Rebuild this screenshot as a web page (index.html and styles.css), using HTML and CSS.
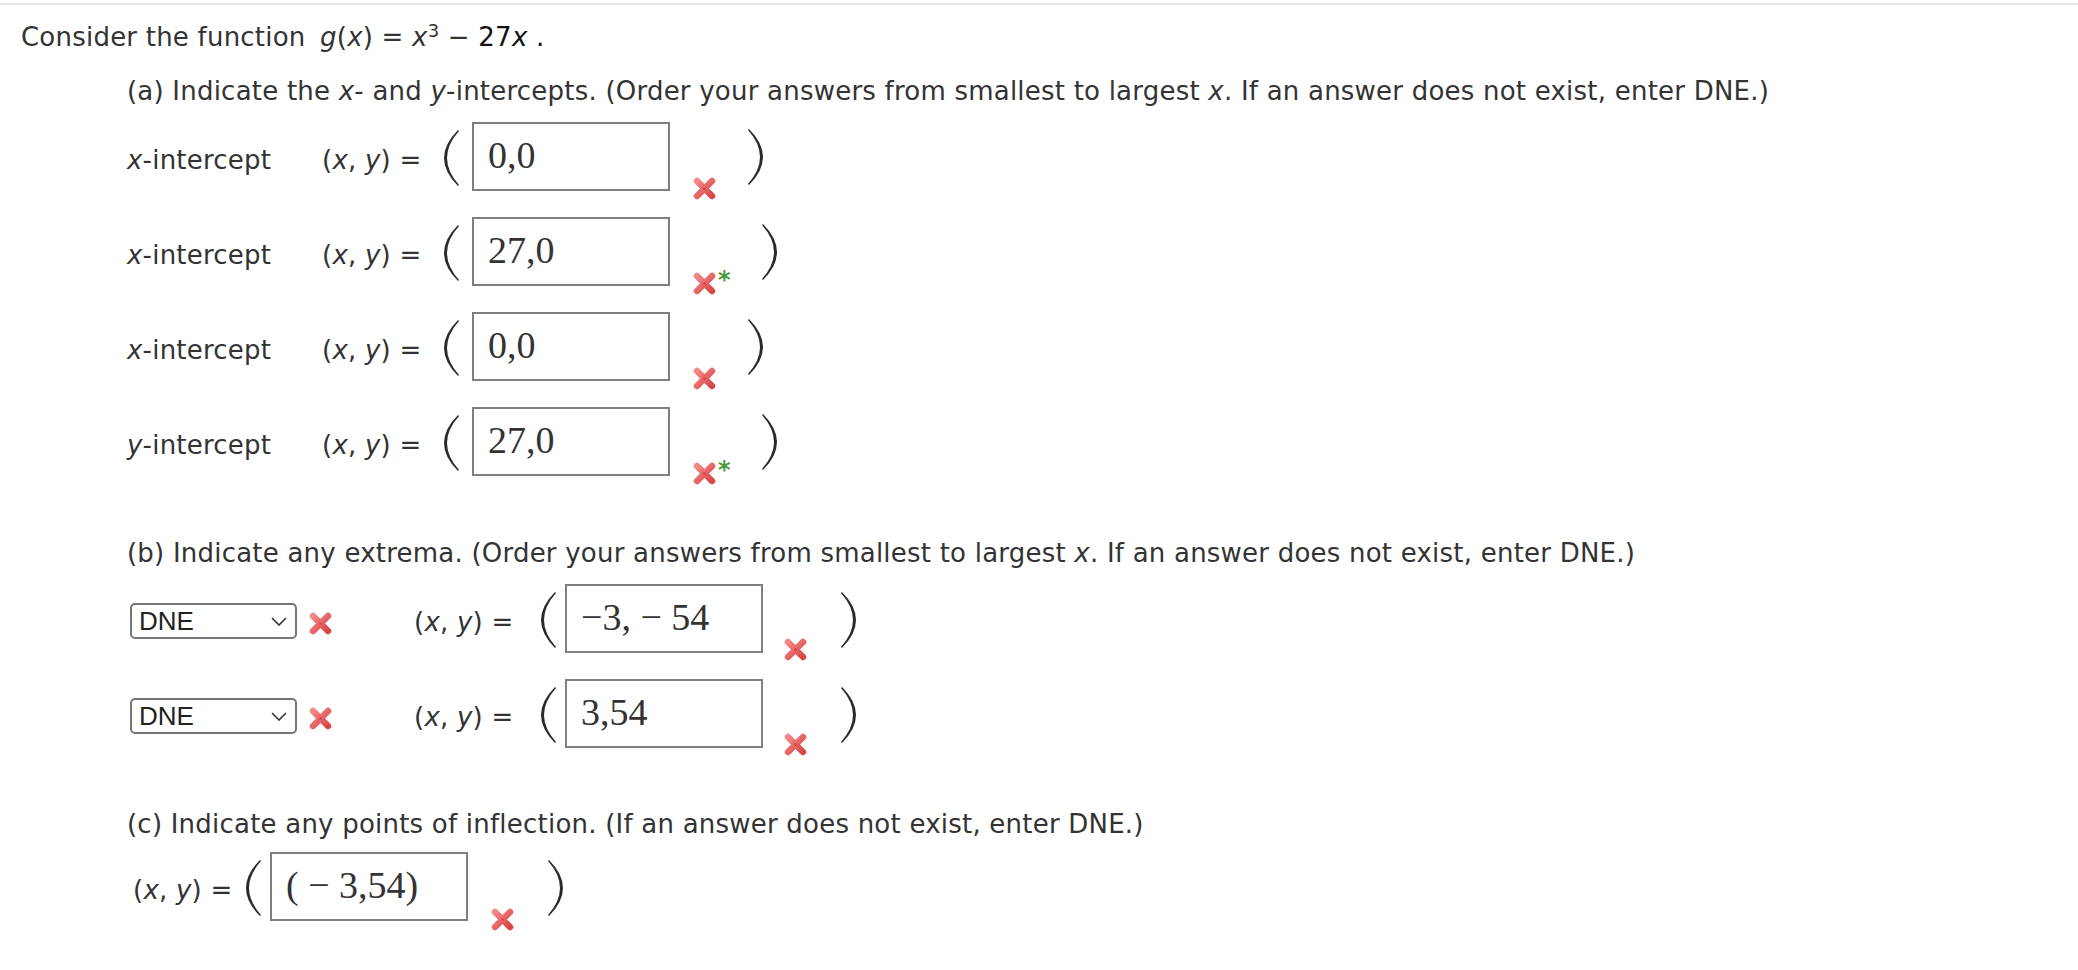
FILE: index.html
```html
<!DOCTYPE html>
<html>
<head>
<meta charset="utf-8">
<title>Function analysis</title>
<link rel="stylesheet" href="styles.css">
</head>
<body>
<div class="topline"></div>
<p class="intro">Consider the function <span class="m"><i>g</i>(<i>x</i>) = <i>x</i><sup class="sup">3</sup> &minus; <span class="dk">27<i>x</i> .</span></span></p>

<div class="part">
  <p class="q q-a">(a) Indicate the <i>x</i>- and <i>y</i>-intercepts. (Order your answers from smallest to largest <i>x</i>. If an answer does not exist, enter DNE.)</p>
  <div class="rows">
    <div class="row">
      <span class="label"><i>x</i>-intercept</span>
      <span class="xy xy-a">(<i>x</i>, <i>y</i>) =</span>
      <svg class="paren" viewBox="0 0 17 56"><path d="M15 0 Q-13 28 15 56 L16 55 Q-8 28 16 1 Z"/></svg>
      <div class="box box-a">0,0</div>
      <span class="mark"><svg class="xmark" viewBox="0 0 25 25"><defs><linearGradient id="rg1" x1="0" y1="0" x2="1" y2="1"><stop offset="0" stop-color="#f48888"/><stop offset="1" stop-color="#d94545"/></linearGradient></defs><path d="M5 5 L20 20 M20 5 L5 20" stroke="url(#rg1)" stroke-width="6.5" stroke-linecap="round" fill="none"/><circle cx="12.5" cy="12.5" r="1.6" fill="#d64a4a"/></svg></span>
      <svg class="paren close" viewBox="0 0 17 56"><path d="M2 0 Q30 28 2 56 L1 55 Q25 28 1 1 Z"/></svg>
    </div>
    <div class="row">
      <span class="label"><i>x</i>-intercept</span>
      <span class="xy xy-a">(<i>x</i>, <i>y</i>) =</span>
      <svg class="paren" viewBox="0 0 17 56"><path d="M15 0 Q-13 28 15 56 L16 55 Q-8 28 16 1 Z"/></svg>
      <div class="box box-a">27,0</div>
      <span class="mark"><svg class="xmark" viewBox="0 0 25 25"><defs><linearGradient id="rg2" x1="0" y1="0" x2="1" y2="1"><stop offset="0" stop-color="#f48888"/><stop offset="1" stop-color="#d94545"/></linearGradient></defs><path d="M5 5 L20 20 M20 5 L5 20" stroke="url(#rg2)" stroke-width="6.5" stroke-linecap="round" fill="none"/><circle cx="12.5" cy="12.5" r="1.6" fill="#d64a4a"/></svg><span class="star">*</span></span>
      <svg class="paren close" viewBox="0 0 17 56"><path d="M2 0 Q30 28 2 56 L1 55 Q25 28 1 1 Z"/></svg>
    </div>
    <div class="row">
      <span class="label"><i>x</i>-intercept</span>
      <span class="xy xy-a">(<i>x</i>, <i>y</i>) =</span>
      <svg class="paren" viewBox="0 0 17 56"><path d="M15 0 Q-13 28 15 56 L16 55 Q-8 28 16 1 Z"/></svg>
      <div class="box box-a">0,0</div>
      <span class="mark"><svg class="xmark" viewBox="0 0 25 25"><defs><linearGradient id="rg3" x1="0" y1="0" x2="1" y2="1"><stop offset="0" stop-color="#f48888"/><stop offset="1" stop-color="#d94545"/></linearGradient></defs><path d="M5 5 L20 20 M20 5 L5 20" stroke="url(#rg3)" stroke-width="6.5" stroke-linecap="round" fill="none"/><circle cx="12.5" cy="12.5" r="1.6" fill="#d64a4a"/></svg></span>
      <svg class="paren close" viewBox="0 0 17 56"><path d="M2 0 Q30 28 2 56 L1 55 Q25 28 1 1 Z"/></svg>
    </div>
    <div class="row">
      <span class="label"><i>y</i>-intercept</span>
      <span class="xy xy-a">(<i>x</i>, <i>y</i>) =</span>
      <svg class="paren" viewBox="0 0 17 56"><path d="M15 0 Q-13 28 15 56 L16 55 Q-8 28 16 1 Z"/></svg>
      <div class="box box-a">27,0</div>
      <span class="mark"><svg class="xmark" viewBox="0 0 25 25"><defs><linearGradient id="rg4" x1="0" y1="0" x2="1" y2="1"><stop offset="0" stop-color="#f48888"/><stop offset="1" stop-color="#d94545"/></linearGradient></defs><path d="M5 5 L20 20 M20 5 L5 20" stroke="url(#rg4)" stroke-width="6.5" stroke-linecap="round" fill="none"/><circle cx="12.5" cy="12.5" r="1.6" fill="#d64a4a"/></svg><span class="star">*</span></span>
      <svg class="paren close" viewBox="0 0 17 56"><path d="M2 0 Q30 28 2 56 L1 55 Q25 28 1 1 Z"/></svg>
    </div>
  </div>

  <p class="q q-b">(b) Indicate any extrema. (Order your answers from smallest to largest <i>x</i>. If an answer does not exist, enter DNE.)</p>
  <div class="rows">
    <div class="row">
      <div class="select"><span class="sel-text">DNE</span><svg class="chev" viewBox="0 0 16 9"><polyline points="1,1 8,8 15,1" fill="none" stroke="#333" stroke-width="1.6"/></svg></div>
      <span class="mark mark-sel"><svg class="xmark" viewBox="0 0 25 25"><defs><linearGradient id="rg5" x1="0" y1="0" x2="1" y2="1"><stop offset="0" stop-color="#f48888"/><stop offset="1" stop-color="#d94545"/></linearGradient></defs><path d="M5 5 L20 20 M20 5 L5 20" stroke="url(#rg5)" stroke-width="6.5" stroke-linecap="round" fill="none"/><circle cx="12.5" cy="12.5" r="1.6" fill="#d64a4a"/></svg></span>
      <span class="xy xy-b">(<i>x</i>, <i>y</i>) =</span>
      <svg class="paren" viewBox="0 0 17 56"><path d="M15 0 Q-13 28 15 56 L16 55 Q-8 28 16 1 Z"/></svg>
      <div class="box box-b">&minus;3, &minus; 54</div>
      <span class="mark mark-b"><svg class="xmark" viewBox="0 0 25 25"><defs><linearGradient id="rg6" x1="0" y1="0" x2="1" y2="1"><stop offset="0" stop-color="#f48888"/><stop offset="1" stop-color="#d94545"/></linearGradient></defs><path d="M5 5 L20 20 M20 5 L5 20" stroke="url(#rg6)" stroke-width="6.5" stroke-linecap="round" fill="none"/><circle cx="12.5" cy="12.5" r="1.6" fill="#d64a4a"/></svg></span>
      <svg class="paren close close-b" viewBox="0 0 17 56"><path d="M2 0 Q30 28 2 56 L1 55 Q25 28 1 1 Z"/></svg>
    </div>
    <div class="row">
      <div class="select"><span class="sel-text">DNE</span><svg class="chev" viewBox="0 0 16 9"><polyline points="1,1 8,8 15,1" fill="none" stroke="#333" stroke-width="1.6"/></svg></div>
      <span class="mark mark-sel"><svg class="xmark" viewBox="0 0 25 25"><defs><linearGradient id="rg7" x1="0" y1="0" x2="1" y2="1"><stop offset="0" stop-color="#f48888"/><stop offset="1" stop-color="#d94545"/></linearGradient></defs><path d="M5 5 L20 20 M20 5 L5 20" stroke="url(#rg7)" stroke-width="6.5" stroke-linecap="round" fill="none"/><circle cx="12.5" cy="12.5" r="1.6" fill="#d64a4a"/></svg></span>
      <span class="xy xy-b">(<i>x</i>, <i>y</i>) =</span>
      <svg class="paren" viewBox="0 0 17 56"><path d="M15 0 Q-13 28 15 56 L16 55 Q-8 28 16 1 Z"/></svg>
      <div class="box box-b">3,54</div>
      <span class="mark mark-b"><svg class="xmark" viewBox="0 0 25 25"><defs><linearGradient id="rg8" x1="0" y1="0" x2="1" y2="1"><stop offset="0" stop-color="#f48888"/><stop offset="1" stop-color="#d94545"/></linearGradient></defs><path d="M5 5 L20 20 M20 5 L5 20" stroke="url(#rg8)" stroke-width="6.5" stroke-linecap="round" fill="none"/><circle cx="12.5" cy="12.5" r="1.6" fill="#d64a4a"/></svg></span>
      <svg class="paren close close-b" viewBox="0 0 17 56"><path d="M2 0 Q30 28 2 56 L1 55 Q25 28 1 1 Z"/></svg>
    </div>
  </div>

  <p class="q q-c">(c) Indicate any points of inflection. (If an answer does not exist, enter DNE.)</p>
  <div class="rows">
    <div class="row">
      <span class="xy xy-c">(<i>x</i>, <i>y</i>) =</span>
      <svg class="paren" viewBox="0 0 17 56"><path d="M15 0 Q-13 28 15 56 L16 55 Q-8 28 16 1 Z"/></svg>
      <div class="box box-b">( &minus; 3,54)</div>
      <span class="mark mark-c"><svg class="xmark" viewBox="0 0 25 25"><defs><linearGradient id="rg9" x1="0" y1="0" x2="1" y2="1"><stop offset="0" stop-color="#f48888"/><stop offset="1" stop-color="#d94545"/></linearGradient></defs><path d="M5 5 L20 20 M20 5 L5 20" stroke="url(#rg9)" stroke-width="6.5" stroke-linecap="round" fill="none"/><circle cx="12.5" cy="12.5" r="1.6" fill="#d64a4a"/></svg></span>
      <svg class="paren close close-b" viewBox="0 0 17 56"><path d="M2 0 Q30 28 2 56 L1 55 Q25 28 1 1 Z"/></svg>
    </div>
  </div>
</div>
</body>
</html>
```

FILE: styles.css
```css
html {
  background: #ffffff;
}

body {
  margin: 0;
  padding-bottom: 40px;
  min-height: 930px;
  background: #ffffff;
  color: #333333;
  font-family: "DejaVu Sans", Verdana, sans-serif;
  font-size: 26px;
  line-height: 30px;
  letter-spacing: 0.22px;
}

.topline {
  margin-top: 3px;
  height: 2px;
  background: #e6e6e6;
}

.intro {
  margin: 17px 0 0 21px;
  white-space: nowrap;
}

.m {
  margin-left: 6px;
}

.sup {
  font-size: 18px;
  line-height: 0;
  vertical-align: 9px;
}

.dk {
  color: #111111;
}

.part {
  margin-left: 127px;
}

.q {
  margin: 0;
  white-space: nowrap;
}

.q-a {
  margin-top: 24px;
  margin-bottom: 16px;
}

.q-b {
  margin-top: 62px;
  margin-bottom: 16px;
}

.q-c {
  margin-top: 61px;
  margin-bottom: 13px;
}

.rows {
  display: flex;
  flex-direction: column;
  gap: 26px;
}

.row {
  display: flex;
  align-items: flex-start;
  height: 69px;
}

.label {
  flex: none;
  width: 195px;
  margin-top: 23px;
  white-space: nowrap;
}

.xy {
  flex: none;
  margin-top: 23px;
  white-space: nowrap;
}

.xy-a {
  width: 121px;
}

.xy-b {
  width: 126px;
  margin-left: 81px;
}

.xy-c {
  width: 112px;
  margin-left: 6px;
}

.paren {
  flex: none;
  width: 17px;
  height: 56px;
  margin-top: 8px;
  fill: #2a2a2a;
}

.paren.close {
  margin-left: 30px;
  margin-top: 7px;
}

.paren.close-b {
  margin-left: 32px;
  margin-top: 8px;
}

.box {
  flex: none;
  box-sizing: border-box;
  width: 198px;
  height: 69px;
  border: 2px solid #7f7f7f;
  padding: 10px 14px;
  font-family: "Liberation Serif", "Times New Roman", serif;
  font-size: 38px;
  line-height: 42px;
  letter-spacing: 0;
  color: #333333;
  white-space: nowrap;
  background: #ffffff;
}

.box-a {
  margin-left: 12px;
}

.box-b {
  margin-left: 8px;
}

.mark {
  flex: none;
  display: flex;
  align-items: flex-start;
  margin-left: 22px;
  margin-top: 54px;
}

.mark-b {
  margin-left: 20px;
  margin-top: 53px;
}

.mark-c {
  margin-left: 22px;
  margin-top: 55px;
}

.mark-sel {
  margin-left: 11px;
  margin-top: 27px;
}

.xmark {
  width: 25px;
  height: 25px;
  display: block;
}

.star {
  margin-left: 1px;
  margin-top: -3px;
  font-family: "DejaVu Sans", sans-serif;
  font-weight: bold;
  font-size: 24px;
  line-height: 24px;
  letter-spacing: 0;
  color: #4f9a3c;
}

.select {
  flex: none;
  box-sizing: border-box;
  width: 167px;
  height: 36px;
  margin-left: 3px;
  margin-top: 19px;
  border: 2px solid #767676;
  border-radius: 5px;
  background: #ffffff;
  display: flex;
  align-items: center;
  justify-content: space-between;
  padding: 0 7px 0 7px;
}

.sel-text {
  font-family: "Liberation Sans", Arial, sans-serif;
  font-size: 26px;
  line-height: 32px;
  letter-spacing: 0;
  color: #222222;
}

.chev {
  width: 16px;
  height: 9px;
  margin-right: 1px;
  margin-top: 1px;
}
```
